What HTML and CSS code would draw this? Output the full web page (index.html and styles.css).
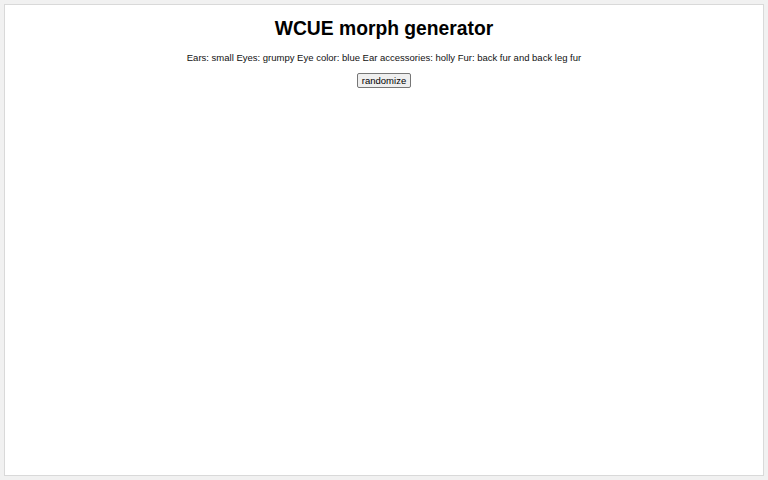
FILE: index.html
```html
<!DOCTYPE html>
<html lang="en">
<head>
    <meta charset="UTF-8">
    <title>WCUE morph generator</title>
    <link rel="stylesheet" href="styles.css">
</head>
<body>
<div id="page">
    <h1 id="title">WCUE morph generator</h1>
    <p id="morph">Ears: small Eyes: grumpy Eye color: blue Ear accessories: holly Fur: back fur and back leg fur</p>
    <button id="randomize" type="button">randomize</button>
</div>
</body>
</html>
```

FILE: styles.css
```css
html, body {
    height: 100%;
    margin: 0;
}

body {
    background-color: #f1f1f1;
    padding: 4px;
    box-sizing: border-box;
    font-family: "Liberation Sans", Arial, sans-serif;
    color: #000;
}

#page {
    height: 100%;
    box-sizing: border-box;
    background-color: #fff;
    border: 1px solid #d9d9d9;
    text-align: center;
    padding-top: 14px;
}

#title {
    font-size: 19.3px;
    font-weight: bold;
    margin: 0;
    line-height: 19px;
}

#morph {
    font-size: 9.5px;
    line-height: 11px;
    margin: 14px 0 7px;
    color: #111;
}

#randomize {
    font-family: "Liberation Sans", Arial, sans-serif;
    font-size: 9.5px;
    padding: 1px 4px;
    background-color: #efefef;
    border: 1px solid #767676;
    border-radius: 2px;
    color: #000;
}
```
